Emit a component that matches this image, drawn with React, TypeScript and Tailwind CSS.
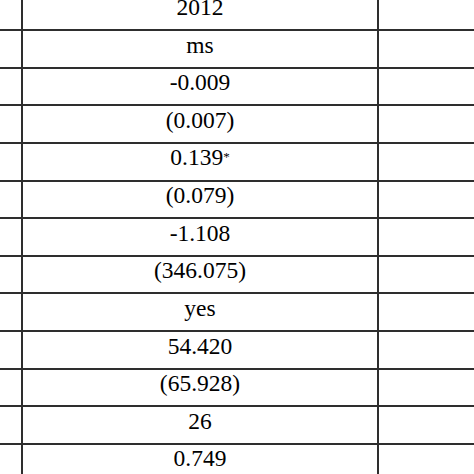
import React from 'react';

const rows: React.ReactNode[] = [
  '2012',
  'ms',
  '-0.009',
  '(0.007)',
  <>
    0.139<sup className="relative -top-[4px] text-[13px]">*</sup>
  </>,
  '(0.079)',
  '-1.108',
  '(346.075)',
  'yes',
  '54.420',
  '(65.928)',
  '26',
  '0.749',
];

export default function App() {
  return (
    <div className="w-[474px] h-[474px] overflow-hidden bg-white text-black font-['Liberation_Serif','Times_New_Roman',serif]">
      <div className="-mt-[6.6px] flex flex-col">
        {rows.map((value, i) => (
          <div
            key={i}
            className="grid grid-cols-[21px_358px_1fr] h-[37.64px] box-border border-b-2 border-[#2e2e2e]"
          >
            <div />
            <div className="border-x-2 border-[#2e2e2e] flex justify-center items-start pt-[2.5px] text-[23.5px] leading-none">
              <span>{value}</span>
            </div>
            <div />
          </div>
        ))}
      </div>
    </div>
  );
}
